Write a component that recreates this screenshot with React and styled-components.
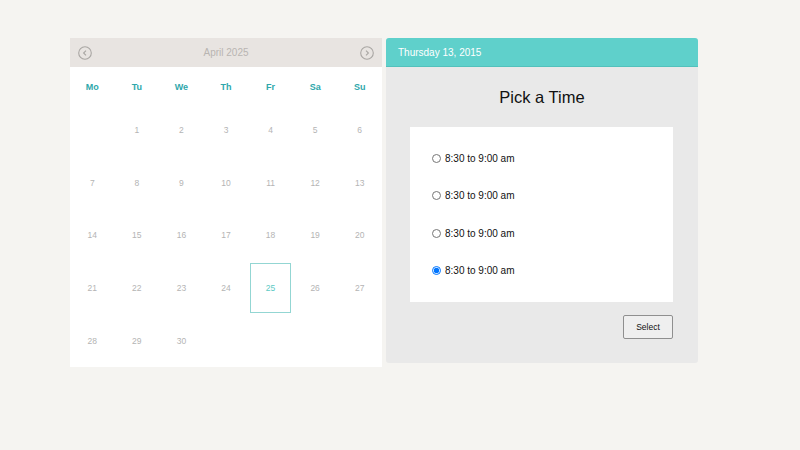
import React, { useState } from 'react';
import styled, { createGlobalStyle } from 'styled-components';

const GlobalStyle = createGlobalStyle`
    body {
        margin: 0;
        background: #f5f4f1;
        font-family: "Liberation Sans", Arial, sans-serif;
    }
`;

const Page = styled.div`
    display: flex;
    align-items: flex-start;
    gap: 4px;
    padding: 38px 0 0 70px;
`;

const Calendar = styled.div`
    width: 312px;
    background: #ffffff;
`;

const CalendarHeader = styled.div`
    display: flex;
    align-items: center;
    justify-content: space-between;
    height: 29px;
    padding: 0 8px;
    background: #e8e4e1;
`;

const MonthLabel = styled.span`
    font-size: 10px;
    color: #b9b5b2;
`;

const NavButton = styled.span`
    display: flex;
    align-items: center;
    justify-content: center;
    width: 14px;
    height: 14px;
    cursor: pointer;
`;

const DayNames = styled.div`
    display: grid;
    grid-template-columns: repeat(7, 1fr);
    height: 36.5px;
    align-items: center;
`;

const DayName = styled.span`
    text-align: center;
    font-size: 9px;
    font-weight: bold;
    color: #2ea7ab;
    padding-top: 4px;
`;

const DaysGrid = styled.div`
    display: grid;
    grid-template-columns: repeat(7, 1fr);
    grid-auto-rows: 52.75px;
`;

const Day = styled.span`
    display: flex;
    align-items: center;
    justify-content: center;
    margin: 1.5px 2px;
    font-size: 8.5px;
    color: ${p => (p.$selected ? '#5ccac5' : '#b4b4b4')};
    border: 1px solid ${p => (p.$selected ? '#93d6d3' : 'transparent')};
`;

const TimePanel = styled.div`
    width: 312px;
    height: 325px;
    background: #e9e9e9;
    border-radius: 3px;
    display: flex;
    flex-direction: column;
    align-items: stretch;
`;

const TimeHeader = styled.div`
    height: 28px;
    padding: 0 12px;
    display: flex;
    align-items: center;
    background: #5fd0cb;
    border-bottom: 1px solid #52c1bc;
    border-radius: 3px 3px 0 0;
    color: #ffffff;
    font-size: 10px;
`;

const Title = styled.h2`
    margin: 19px 0 19px;
    text-align: center;
    font-size: 16.5px;
    line-height: 22px;
    font-weight: normal;
    color: #111;
`;

const Options = styled.div`
    margin: 0 25px 0 24px;
    padding: 12.5px 22px;
    background: #ffffff;
`;

const Option = styled.label`
    display: flex;
    align-items: center;
    height: 37.5px;
    font-size: 10px;
    color: #111;
    cursor: pointer;
`;

const Radio = styled.input`
    width: 9px;
    height: 9px;
    margin: 0 4px 0 0;
`;

const Footer = styled.div`
    display: flex;
    justify-content: flex-end;
    margin: 13px 25px 0 24px;
`;

const SelectButton = styled.button`
    width: 50px;
    height: 24px;
    padding: 0;
    background: #efefef;
    border: 1px solid #8f8f8f;
    border-radius: 2px;
    font-family: "Liberation Sans", Arial, sans-serif;
    font-size: 8.5px;
    color: #111;
`;

const Chevron = ({ dir }) => (
    <svg width="14" height="14" viewBox="0 0 14 14">
        <circle cx="7" cy="7" r="6.3" fill="none" stroke="#a9a6a3" strokeWidth="1.1" />
        <path
            d={dir === 'left' ? 'M8 4.6 L5.6 7 L8 9.4' : 'M6 4.6 L8.4 7 L6 9.4'}
            fill="none"
            stroke="#a9a6a3"
            strokeWidth="1.1"
        />
    </svg>
);

const names = ['Mo', 'Tu', 'We', 'Th', 'Fr', 'Sa', 'Su'];
const days = [null, ...Array.from({ length: 30 }, (_, i) => i + 1)];

export default function App() {
    const [picked, setPicked] = useState(3);

    return (
        <>
            <GlobalStyle />
            <Page>
                <Calendar>
                    <CalendarHeader>
                        <NavButton><Chevron dir="left" /></NavButton>
                        <MonthLabel>April 2025</MonthLabel>
                        <NavButton><Chevron dir="right" /></NavButton>
                    </CalendarHeader>
                    <DayNames>
                        {names.map(n => <DayName key={n}>{n}</DayName>)}
                    </DayNames>
                    <DaysGrid>
                        {days.map((d, i) => (
                            <Day key={i} $selected={d === 25}>{d}</Day>
                        ))}
                    </DaysGrid>
                </Calendar>
                <TimePanel>
                    <TimeHeader>Thursday 13, 2015</TimeHeader>
                    <Title>Pick a Time</Title>
                    <Options>
                        {[0, 1, 2, 3].map(i => (
                            <Option key={i}>
                                <Radio
                                    type="radio"
                                    name="time"
                                    checked={picked === i}
                                    onChange={() => setPicked(i)}
                                />
                                8:30 to 9:00 am
                            </Option>
                        ))}
                    </Options>
                    <Footer>
                        <SelectButton>Select</SelectButton>
                    </Footer>
                </TimePanel>
            </Page>
        </>
    );
}
